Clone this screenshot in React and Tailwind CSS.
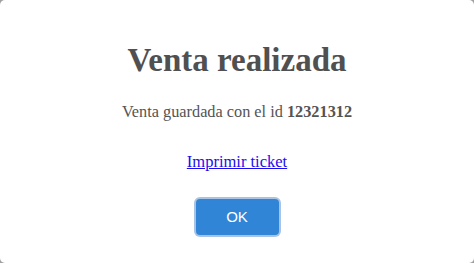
export default function App() {
  return (
    <div className="w-[474px] h-[263px] bg-[#a0a0a0]">
      <div
        className="w-full h-full bg-white rounded-[5px] flex flex-col items-center"
        style={{ fontFamily: '"Liberation Serif", "Times New Roman", serif' }}
      >
        <h2 className="mt-[40px] text-[33px] leading-[40px] font-bold text-[#505050]">
          Venta realizada
        </h2>
        <p className="mt-[20px] text-[16.3px] leading-[24px] text-[#545454]">
          Venta guardada con el id <b>12321312</b>
        </p>
        <a href="#" className="mt-[26px] text-[16.5px] leading-[24px] text-[#1a0dee] underline">
          Imprimir ticket
        </a>
        <button
          className="mt-[25px] w-[83px] h-[36px] rounded-[4px] bg-[#3085d6] text-white text-[15px] shadow-[0_0_0_2px_#a9c4e2]"
          style={{ fontFamily: '"Liberation Sans", Arial, sans-serif' }}
        >
          OK
        </button>
      </div>
    </div>
  );
}
